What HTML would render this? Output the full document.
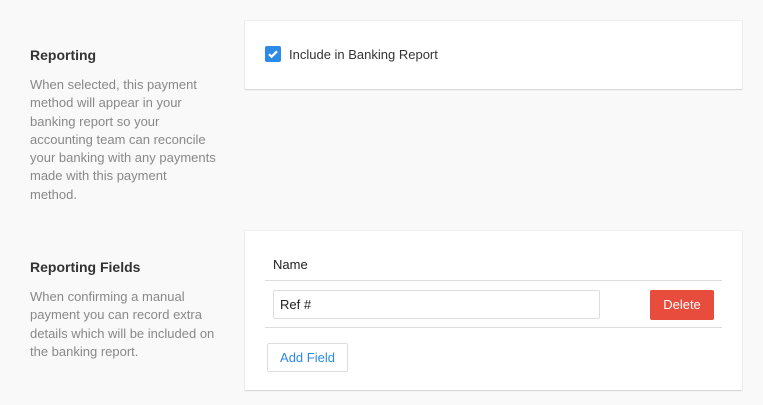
<!DOCTYPE html>
<html><head><meta charset="utf-8"><style>
*{box-sizing:border-box;margin:0;padding:0}
body{width:763px;height:405px;background:#f9f9f9;font-family:"Liberation Sans",sans-serif;position:relative;overflow:hidden}
.t{position:absolute;left:30px;font-size:14px;font-weight:bold;color:#333}
.d{position:absolute;left:30px;width:186px;font-size:13px;line-height:18.3px;color:#888}
.card{position:absolute;left:245px;width:497px;background:#fff;box-shadow:0 1px 1px rgba(0,0,0,.12),0 0 0 1px #f0f0f0}
.abs{position:absolute}
</style></head><body>
<div class="t" style="top:47px">Reporting</div>
<div class="d" style="top:76px">When selected, this payment method will appear in your banking report so your accounting team can reconcile your banking with any payments made with this payment method.</div>
<div class="t" style="top:259px">Reporting Fields</div>
<div class="d" style="top:288px">When confirming a manual payment you can record extra details which will be included on the banking report.</div>

<div class="card" style="top:21px;height:68px">
  <div class="abs" style="left:20px;top:25px;width:16px;height:16px;background:#2d8ae6;border-radius:2px">
    <svg width="16" height="16" viewBox="0 0 16 16"><path d="M4 8.2l2.6 2.5L12 5.3" fill="none" stroke="#fff" stroke-width="2.2"/></svg>
  </div>
  <div class="abs" style="left:44px;top:26px;font-size:13px;color:#333">Include in Banking Report</div>
</div>

<div class="card" style="top:231px;height:159px">
  <div class="abs" style="left:28px;top:26px;font-size:13px;color:#222">Name</div>
  <div class="abs" style="left:20px;top:49px;width:457px;height:1px;background:#ddd"></div>
  <div class="abs" style="left:28px;top:59px;width:327px;height:29px;border:1px solid #ddd;border-radius:2px;font-size:13px;color:#222;padding:6px 6px">Ref #</div>
  <div class="abs" style="left:405px;top:59px;width:64px;height:30px;background:#e84c3d;border-radius:2px;color:#fff;font-size:13px;text-align:center;line-height:29px">Delete</div>
  <div class="abs" style="left:20px;top:96px;width:457px;height:1px;background:#ddd"></div>
  <div class="abs" style="left:22px;top:112px;width:81px;height:29px;border:1px solid #ddd;border-radius:2px;color:#2d8ae6;font-size:13px;text-align:center;line-height:27px">Add Field</div>
</div>
</body></html>
